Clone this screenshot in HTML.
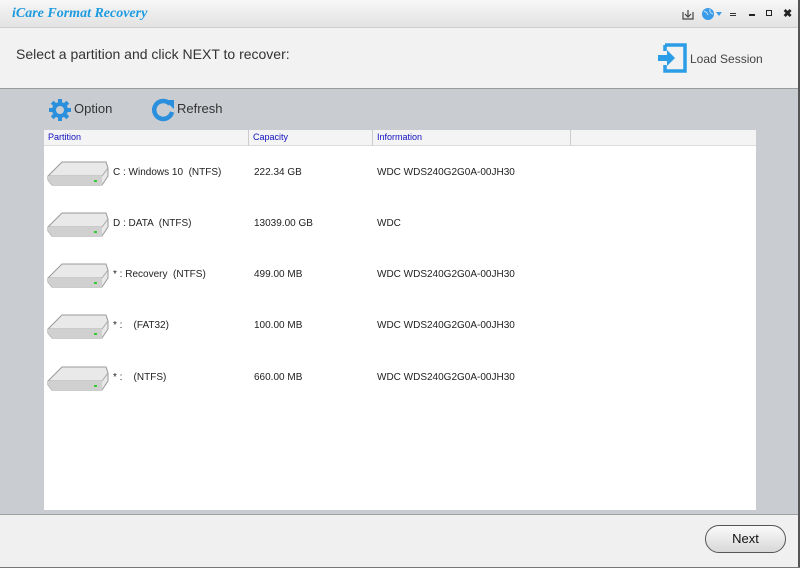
<!DOCTYPE html>
<html><head><style>
*{margin:0;padding:0;box-sizing:border-box}
body{width:800px;height:568px;overflow:hidden;font-family:"Liberation Sans",Arial,sans-serif;background:#f0f0f0;position:relative}
.abs{position:absolute}
.title{left:0;top:0;width:800px;height:28px;background:linear-gradient(#f7f7f7,#e2e2e2);border-bottom:1px solid #cfcfcf}
.title span{position:absolute;left:12px;top:6px;font:italic bold 14px "Liberation Serif",serif;color:#1d9be0}
.hdr{left:0;top:28px;width:800px;height:61px;background:#f2f2f2;border-bottom:1px solid #9a9a9a}
.panel{left:0;top:89px;width:800px;height:426px;background:#c9ccd1;border-bottom:1px solid #a0a0a0}
.table{left:44px;top:130px;width:712px;height:380px;background:#fff}
.th{top:0;height:16px;background:#f4f4f4;border-bottom:1px solid #ddd;border-right:1px solid #ccc;font-size:9px;color:#1010c0;padding:2px 4px}
.row div{white-space:pre}
.row{font-size:10px;color:#222;width:800px;height:568px}
.disk{width:64px;height:30px}
.btn{left:705px;top:525px;width:81px;height:28px;border:1px solid #555;border-radius:14px;background:linear-gradient(#fafafa,#d8d8d8);font-size:13px;text-align:center;line-height:26px;color:#111}
</style></head><body>
<div class="abs title"><span>iCare Format Recovery</span>
<svg class="abs" style="left:682px;top:9px" width="12" height="11"><path d="M1 3v7h10V3M6 1v6M3 5l3 3 3-3" fill="none" stroke="#444" stroke-width="1.2"/></svg>
<svg class="abs" style="left:701px;top:7px" width="22" height="14"><circle cx="7" cy="7" r="6" fill="#3a9be8"/><path d="M3 4q3 1 4 4M9 2q-1 4 3 5" stroke="#bfe0fa" fill="none"/><path d="M15 5h6l-3 4z" fill="#3a9be8"/></svg>
<div class="abs" style="left:730px;top:13px;width:6px;height:1px;background:#333;box-shadow:0 2px 0 #333"></div>
<div class="abs" style="left:749px;top:14px;width:6px;height:2px;background:#222"></div>
<div class="abs" style="left:766px;top:10px;width:6px;height:6px;border:1.5px solid #222"></div>
<div class="abs" style="left:783px;top:7px;font-size:11px;font-weight:bold;color:#222">✖</div>
</div>
<div class="abs hdr">
<div class="abs" style="left:16px;top:18px;font-size:14px;color:#333">Select a partition and click NEXT to recover:</div>
<svg class="abs" style="left:656px;top:14px" width="32" height="32"><path d="M9 3h20v26H9v-6M9 9V3" fill="none" stroke="#2a9de6" stroke-width="3.5"/><path d="M2 13h9V8l8 8-8 8v-5H2z" fill="#2a9de6"/></svg>
<div class="abs" style="left:690px;top:24px;font-size:12px;color:#444">Load Session</div>
</div>
<div class="abs panel">
<svg class="abs" style="left:48px;top:9px" width="24" height="24" viewBox="0 0 24 24"><g fill="#2a8fdc"><circle cx="12" cy="12" r="8"/><rect x="10" y="1" width="4" height="22"/><rect x="1" y="10" width="22" height="4"/><rect x="10" y="1" width="4" height="22" transform="rotate(45 12 12)"/><rect x="10" y="1" width="4" height="22" transform="rotate(-45 12 12)"/></g><circle cx="12" cy="12" r="4" fill="#c9ccd1"/></svg>
<div class="abs" style="left:74px;top:12px;font-size:13px;color:#333">Option</div>
<svg class="abs" style="left:150px;top:8px" width="26" height="26" viewBox="0 0 26 26"><path d="M20 7A9 9 0 1 0 22 15" fill="none" stroke="#2a8fdc" stroke-width="4.5"/><path d="M14 3h10v9z" fill="#2a8fdc"/></svg>
<div class="abs" style="left:177px;top:12px;font-size:13px;color:#333">Refresh</div>
</div>
<div class="abs table">
<div class="abs th" style="left:0;width:205px">Partition</div>
<div class="abs th" style="left:205px;width:124px">Capacity</div>
<div class="abs th" style="left:329px;width:198px">Information</div>
<div class="abs th" style="left:527px;width:185px;border-right:none"></div>
</div>
<svg width="0" height="0" style="position:absolute"><defs><symbol id="d" viewBox="0 0 64 30"><path d="M2 18L16 4h44l2 6v8L56 27H6L2 22z" fill="#e9e9e9" stroke="#999"/><path d="M2 18h54l6-8" fill="none" stroke="#aaa"/><path d="M2 18v4l4 5h50v-9z" fill="#d0d0d0"/><rect x="48" y="22" width="3" height="2" fill="#3c3"/></symbol></defs></svg>
<div class="abs row" style="left:0;top:0">
<svg class="abs disk" style="left:46px;top:158px"><use href="#d"/></svg><div class="abs" style="left:113px;top:167px">C : Windows 10  (NTFS)</div><div class="abs" style="left:254px;top:167px">222.34 GB</div><div class="abs" style="left:377px;top:167px">WDC WDS240G2G0A-00JH30</div>
<svg class="abs disk" style="left:46px;top:209px"><use href="#d"/></svg><div class="abs" style="left:113px;top:218px">D : DATA  (NTFS)</div><div class="abs" style="left:254px;top:218px">13039.00 GB</div><div class="abs" style="left:377px;top:218px">WDC</div>
<svg class="abs disk" style="left:46px;top:260px"><use href="#d"/></svg><div class="abs" style="left:113px;top:269px">* : Recovery  (NTFS)</div><div class="abs" style="left:254px;top:269px">499.00 MB</div><div class="abs" style="left:377px;top:269px">WDC WDS240G2G0A-00JH30</div>
<svg class="abs disk" style="left:46px;top:311px"><use href="#d"/></svg><div class="abs" style="left:113px;top:320px">* :    (FAT32)</div><div class="abs" style="left:254px;top:320px">100.00 MB</div><div class="abs" style="left:377px;top:320px">WDC WDS240G2G0A-00JH30</div>
<svg class="abs disk" style="left:46px;top:363px"><use href="#d"/></svg><div class="abs" style="left:113px;top:372px">* :    (NTFS)</div><div class="abs" style="left:254px;top:372px">660.00 MB</div><div class="abs" style="left:377px;top:372px">WDC WDS240G2G0A-00JH30</div>
</div>
<div class="abs btn">Next</div>
<div class="abs" style="right:0;top:0;width:2px;height:568px;background:#555"></div>
<div class="abs" style="left:0;bottom:0;width:800px;height:1px;background:#777"></div>
</body></html>
